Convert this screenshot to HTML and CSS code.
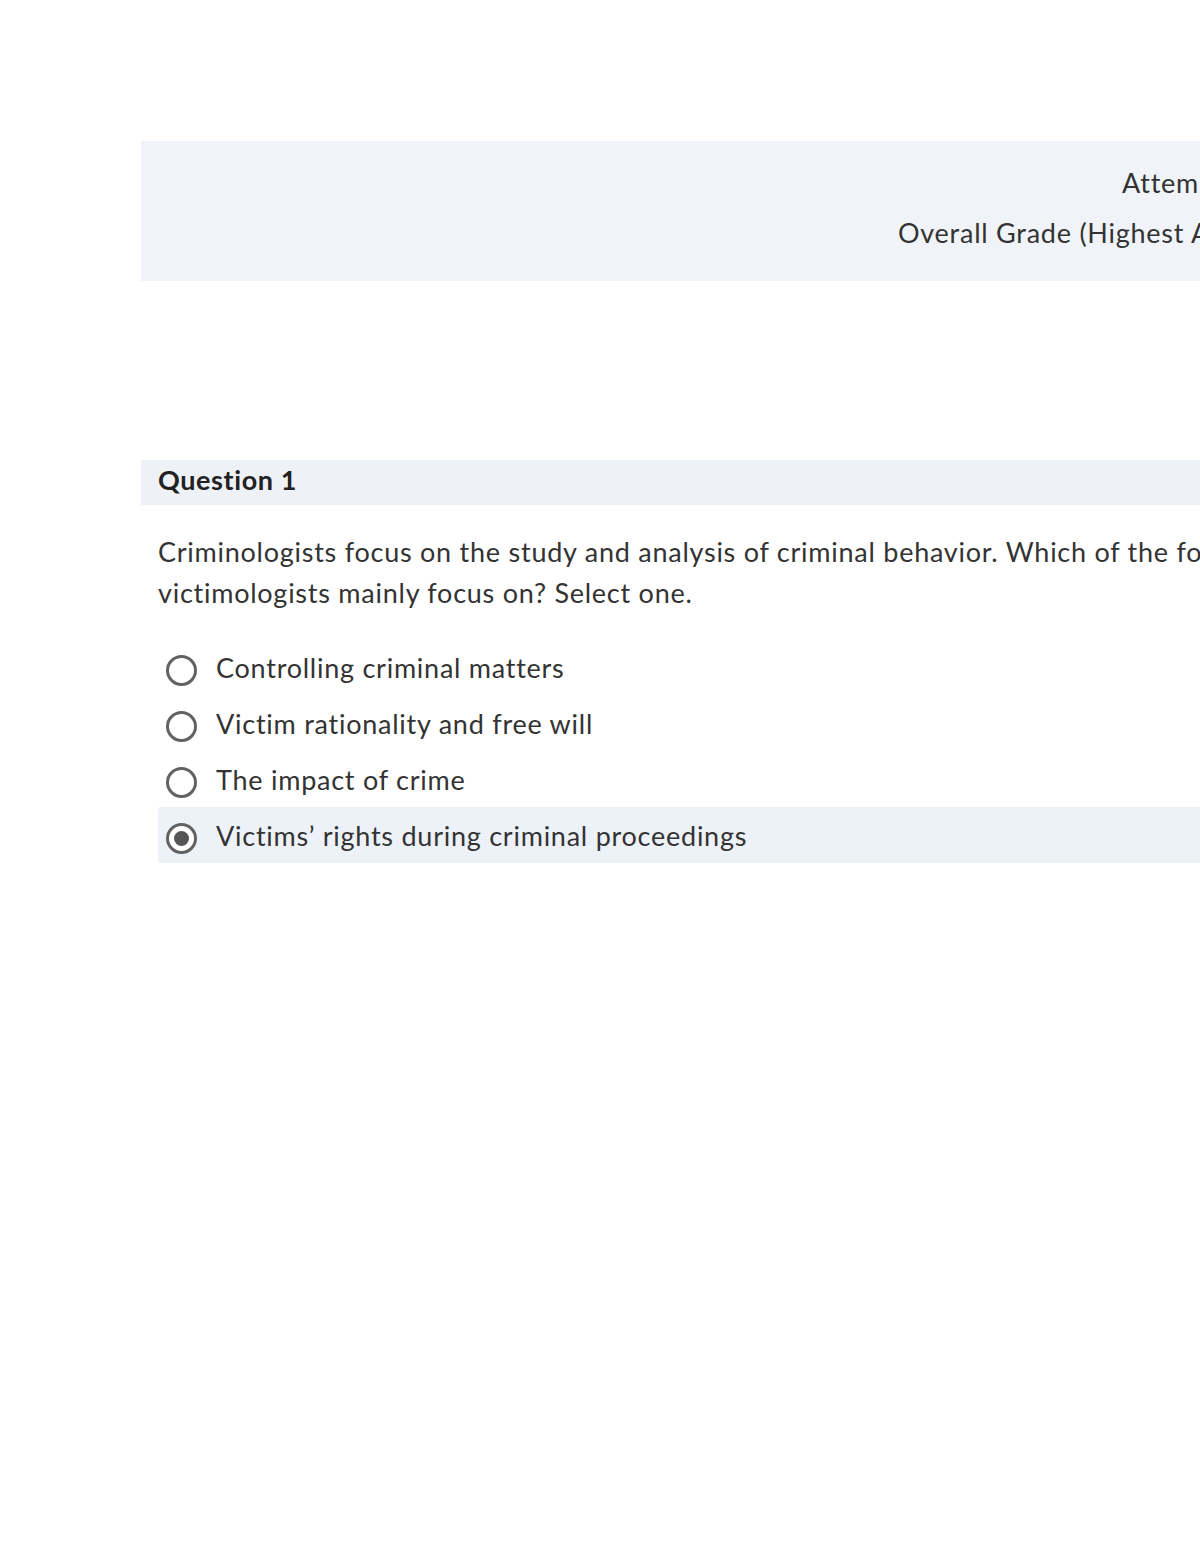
FILE: index.html
```html
<!DOCTYPE html>
<html>
<head>
<meta charset="utf-8">
<link rel="stylesheet" href="styles.css">
</head>
<body>
<div class="page">
  <div class="summary">
    <div class="line line-attempt">Attempt Score: 1 / 1 - 100 %</div>
    <div class="line line-grade">Overall Grade (Highest Attempt): 1 / 1 - 100 %</div>
  </div>
  <div class="question">
    <div class="q-head">Question 1</div>
    <div class="q-text">Criminologists focus on the study and analysis of criminal behavior. Which of the following do victimologists mainly focus on? Select one.</div>
    <div class="options">
      <div class="option"><span class="radio"></span><span class="label">Controlling criminal matters</span></div>
      <div class="option"><span class="radio"></span><span class="label">Victim rationality and free will</span></div>
      <div class="option"><span class="radio"></span><span class="label">The impact of crime</span></div>
      <div class="option selected"><span class="radio checked"></span><span class="label">Victims’ rights during criminal proceedings</span></div>
    </div>
  </div>
</div>
</body>
</html>
```
FILE: styles.css
```css
html, body {
  margin: 0;
  padding: 0;
  background: #ffffff;
  overflow: hidden;
}
body {
  font-family: Lato, "Open Sans", sans-serif;
  color: #333333;
  width: 1200px;
  height: 1553px;
}
.page {
  width: 1500px;
  padding-top: 141px;
  padding-left: 141px;
}
.summary {
  background: #f0f3f8;
  height: 140px;
  box-sizing: border-box;
  padding-top: 17px;
  font-size: 27px;
  letter-spacing: 0.75px;
  line-height: 50px;
  color: #333333;
}
.line { white-space: nowrap; }
.line-attempt { padding-left: 981px; }
.line-grade { padding-left: 757px; }
.question {
  margin-top: 179px;
}
.q-head {
  background: #eef2f7;
  height: 45px;
  line-height: 40px;
  font-size: 27px;
  letter-spacing: 0.6px;
  font-weight: bold;
  padding-left: 17px;
  color: #222222;
}
.q-text {
  padding-left: 17px;
  margin-top: 26px;
  font-size: 27px;
  letter-spacing: 0.75px;
  line-height: 41px;
  width: 1250px;
  color: #333333;
}
.options {
  margin-top: 26px;
  margin-left: 17px;
}
.option {
  display: flex;
  align-items: center;
  height: 56px;
  font-size: 27px;
  letter-spacing: 0.75px;
  color: #333333;
}
.option.selected {
  background: #edf2f9;
  border-radius: 3px;
}
.radio {
  flex: none;
  width: 25px;
  height: 25px;
  border: 3px solid #626262;
  border-radius: 50%;
  margin-left: 8px;
  margin-right: 19px;
  box-sizing: content-box;
  position: relative;
  top: 3px;
  background: #ffffff;
}
.radio.checked::after {
  content: "";
  position: absolute;
  left: 5px;
  top: 5px;
  width: 15px;
  height: 15px;
  border-radius: 50%;
  background: #555555;
}
.label { white-space: nowrap; }
```
